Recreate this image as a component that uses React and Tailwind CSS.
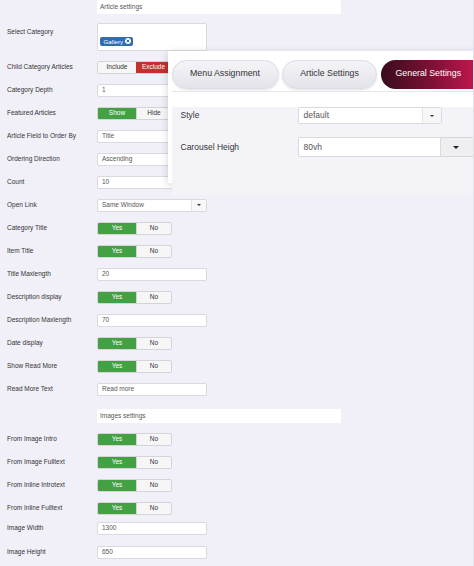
import React from "react";

const font = { fontFamily: '"Liberation Sans", Arial, sans-serif' };

function Caret({ size = 2 }) {
  return (
    <span
      className={
        size === 2
          ? "block h-0 w-0 border-x-[2px] border-t-[2px] border-x-transparent border-t-[#333]"
          : "block h-0 w-0 border-x-[3px] border-t-[3px] border-x-transparent border-t-[#222]"
      }
    />
  );
}

function Input({ value }) {
  return (
    <div className="flex h-[13px] w-[110px] items-center rounded-[2px] border border-[#d9d9df] bg-white pl-[4px] text-[6.5px] text-[#555]">
      {value}
    </div>
  );
}

function Select({ value }) {
  return (
    <div className="flex h-[13px] w-[110px] items-center rounded-[2px] border border-[#d9d9df] bg-white text-[6.5px] text-[#555]">
      <span className="flex-1 pl-[4px]">{value}</span>
      <span className="flex h-full w-[15px] items-center justify-center border-l border-[#e2e2e6] bg-[#f7f7f7]">
        <Caret />
      </span>
    </div>
  );
}

function Toggle({ on = "Yes", off = "No", activeClass = "bg-[#43a043] text-white", firstActive = true }) {
  return (
    <div className="flex h-[13px] w-[75px] overflow-hidden rounded-[2px] border border-[#d3d3d8] text-[6.5px]">
      <span
        className={
          firstActive
            ? `flex w-[38px] items-center justify-center ${activeClass}`
            : "flex w-[38px] items-center justify-center bg-[#f6f6f6] text-[#333]"
        }
      >
        {on}
      </span>
      <span
        className={
          firstActive
            ? "flex flex-1 items-center justify-center border-l border-[#d3d3d8] bg-[#f6f6f6] text-[#333]"
            : `flex flex-1 items-center justify-center ${activeClass}`
        }
      >
        {off}
      </span>
    </div>
  );
}

function Row({ label, children, h = "h-[23px]" }) {
  return (
    <div className={`flex ${h} items-center pl-[7px]`}>
      <div className="w-[90px] shrink-0 text-[6.5px] text-[#333]">{label}</div>
      {children}
    </div>
  );
}

function SectionBar({ title, className = "" }) {
  return (
    <div className={`ml-[97px] flex h-[14px] w-[244px] items-center bg-white pl-[3px] text-[6.5px] text-[#555] ${className}`}>
      {title}
    </div>
  );
}

export default function App() {
  return (
    <div className="relative h-[566px] w-[474px] overflow-hidden border-r border-[#e4e3ec] bg-[#f1f0f9]" style={font}>
      <SectionBar title="Article settings" />

      <div className="mb-[4.5px] flex pl-[7px] pt-[9px]">
        <div className="w-[90px] shrink-0 pt-[4px] text-[6.5px] text-[#333]">Select Category</div>
        <div className="h-[28px] w-[110px] rounded-[2px] border border-[#d9d9df] bg-white pl-[2px] pt-[2.5px]">
          <span className="inline-flex h-[9px] items-center gap-[2px] rounded-[2px] bg-[#2f6db0] pl-[3.5px] pr-[2px] text-[6.2px] text-white">
            Gallery
            <svg width="6" height="6" viewBox="0 0 12 12" className="block">
              <circle cx="6" cy="6" r="6" fill="#fff" />
              <path d="M3.8 3.8 L8.2 8.2 M8.2 3.8 L3.8 8.2" stroke="#2f6db0" strokeWidth="2" strokeLinecap="round" />
            </svg>
          </span>
        </div>
      </div>

      <Row label="Child Category Articles">
        <Toggle on="Include" off="Exclude" firstActive={false} activeClass="bg-[#c4302b] text-white" />
      </Row>
      <Row label="Category Depth">
        <Input value="1" />
      </Row>
      <Row label="Featured Articles">
        <Toggle on="Show" off="Hide" />
      </Row>
      <Row label="Article Field to Order By">
        <Select value="Title" />
      </Row>
      <Row label="Ordering Direction">
        <Select value="Ascending" />
      </Row>
      <Row label="Count">
        <Input value="10" />
      </Row>
      <Row label="Open Link">
        <Select value="Same Window" />
      </Row>
      <Row label="Category Title">
        <Toggle />
      </Row>
      <Row label="Item Title">
        <Toggle />
      </Row>
      <Row label="Title Maxlength">
        <Input value="20" />
      </Row>
      <Row label="Description display">
        <Toggle />
      </Row>
      <Row label="Description Maxlength">
        <Input value="70" />
      </Row>
      <Row label="Date display">
        <Toggle />
      </Row>
      <Row label="Show Read More">
        <Toggle />
      </Row>
      <Row label="Read More Text">
        <Input value="Read more" />
      </Row>

      <SectionBar title="Images settings" className="mb-[4.5px] mt-[8.5px]" />

      <Row label="From Image Intro">
        <Toggle />
      </Row>
      <Row label="From Image Fulltext">
        <Toggle />
      </Row>
      <Row label="From Inline Introtext">
        <Toggle />
      </Row>
      <Row label="From Inline Fulltext">
        <Toggle />
      </Row>
      <Row label="Image Width" h="h-[17px]">
        <Input value="1300" />
      </Row>
      <Row label="Image Height" h="h-[31px]">
        <Input value="650" />
      </Row>

      {/* Overlay panel */}
      <div className="absolute left-[168px] top-[51px] h-[132px] w-[320px] bg-white pb-[3px] pl-[3.5px] shadow-[0_2px_8px_rgba(0,0,0,0.18)]">
        <div className="flex gap-[3.5px] border-b border-[#e6e6ec] pb-[2.5px] pt-[8.5px]">
          <div className="flex h-[29px] w-[107px] items-center justify-center rounded-full border border-[#dcdce4] bg-gradient-to-b from-[#f4f4f8] to-[#e3e3ea] text-[8.8px] text-[#333] shadow-[0_1px_2px_rgba(0,0,0,0.12)]">
            Menu Assignment
          </div>
          <div className="flex h-[29px] w-[95px] items-center justify-center rounded-full border border-[#dcdce4] bg-gradient-to-b from-[#f4f4f8] to-[#e3e3ea] text-[8.8px] text-[#333] shadow-[0_1px_2px_rgba(0,0,0,0.12)]">
            Article Settings
          </div>
          <div className="flex h-[29px] w-[104px] items-center justify-start rounded-l-full bg-gradient-to-r from-[#3a0b1d] via-[#7e1136] to-[#cf1a55] pl-[15px] text-[8.8px] text-white">
            General Settings
          </div>
        </div>
        <div className="h-[88px] bg-[#f4f4f8]">
          <div className="mt-[15px] flex h-[17px] items-center">
            <div className="w-[126px] shrink-0 pl-[9px] text-[8.5px] text-[#333]">Style</div>
            <div className="flex h-[17px] w-[144px] items-center rounded-[2px] border border-[#dadade] bg-white text-[8.5px] text-[#555]">
              <span className="flex-1 pl-[5px]">default</span>
              <span className="flex h-full w-[19px] items-center justify-center border-l border-[#e3e3e7] bg-[#f7f7f7]">
                <Caret />
              </span>
            </div>
          </div>
          <div className="mt-[13px] flex h-[20px] items-center">
            <div className="w-[126px] shrink-0 pl-[9px] text-[8.5px] text-[#333]">Carousel Heigh</div>
            <div className="flex h-[20px] w-[143px] items-center rounded-l-[2px] border border-[#dadade] bg-white pl-[5px] text-[8.5px] text-[#555]">
              80vh
            </div>
            <div className="flex h-[20px] w-[36px] items-center justify-center border border-l-0 border-[#d5d5da] bg-[#efeff1] pr-[4px]">
              <Caret size={3} />
            </div>
          </div>
        </div>
      </div>
    </div>
  );
}
